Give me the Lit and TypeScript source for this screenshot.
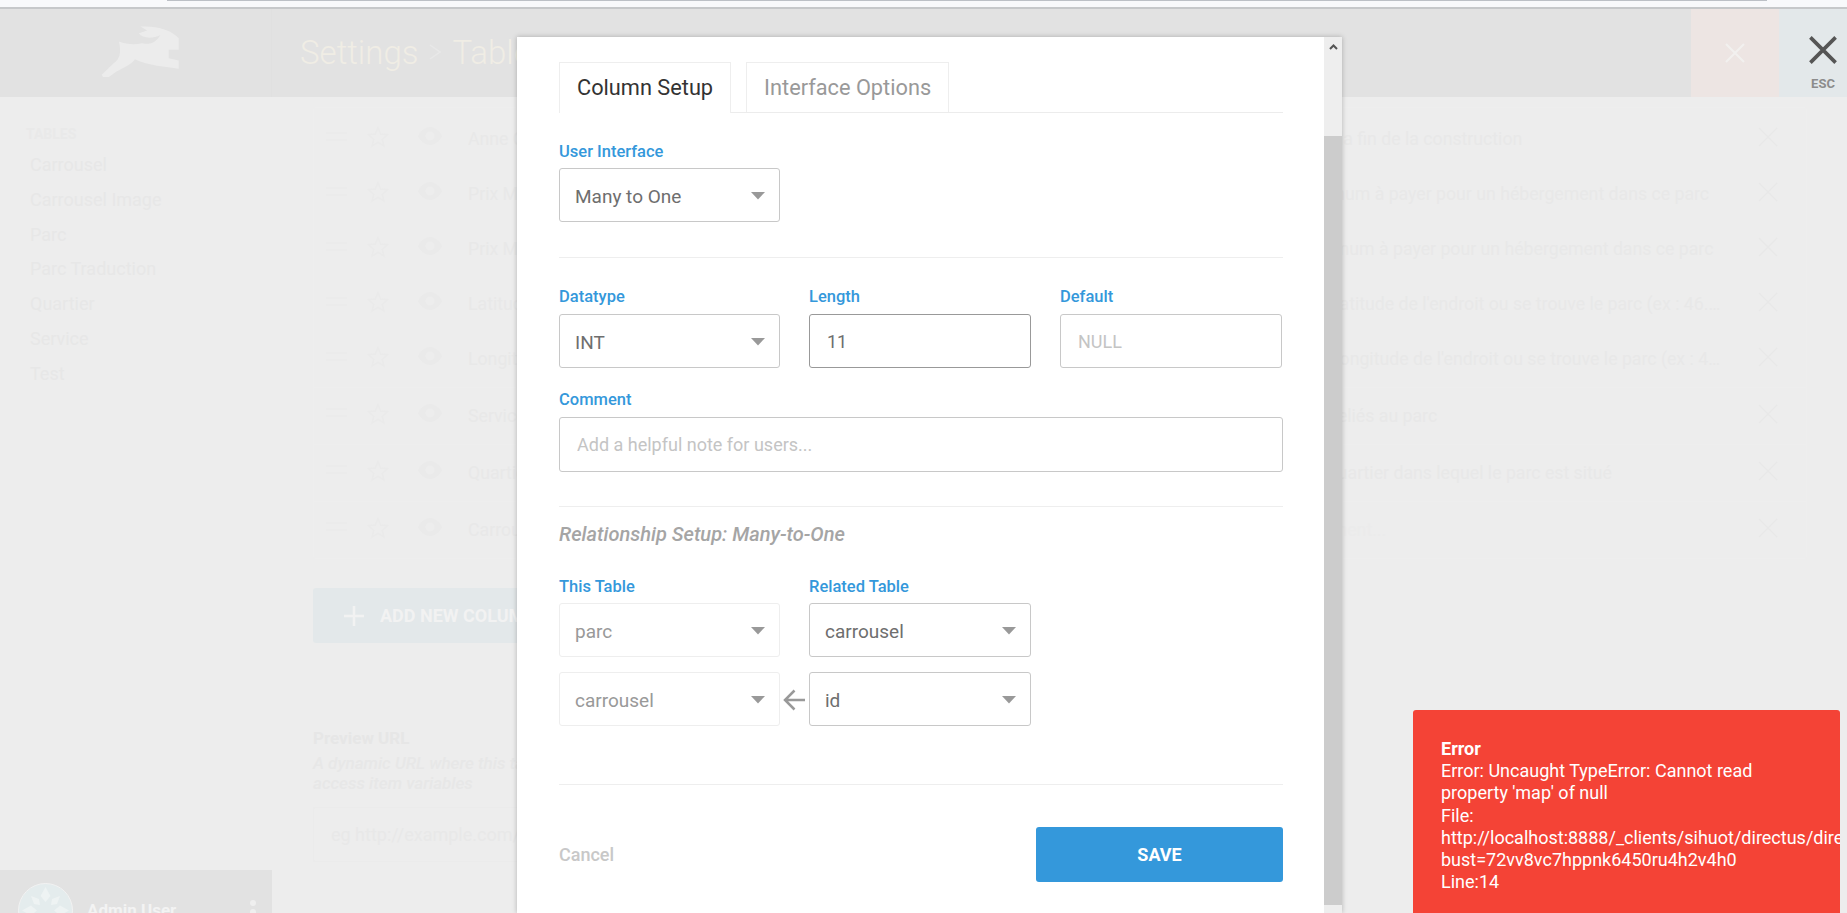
import { LitElement, html, css, svg } from "lit";
import { customElement } from "lit/decorators.js";
import { classMap } from "lit/directives/class-map.js";

const TABLES = ["Carrousel", "Carrousel Image", "Parc", "Parc Traduction", "Quartier", "Service", "Test"];

const COLUMNS = [
  { name: "Anne Construction", note: "Année de la fin de la construction", tall: false, hint: false },
  { name: "Prix Min", note: "Prix minimum à payer pour un hébergement dans ce parc", tall: false, hint: false },
  { name: "Prix Max", note: "Prix maximum à payer pour un hébergement dans ce parc", tall: false, hint: false },
  { name: "Latitude", note: "Degré de latitude de l'endroit ou se trouve le parc (ex : 46.8139)", tall: false, hint: false },
  { name: "Longitude", note: "Degré de longitude de l'endroit ou se trouve le parc (ex : 4.56781)", tall: false, hint: false },
  { name: "Services", note: "Services reliés au parc", tall: true, hint: false },
  { name: "Quartier", note: "Nom du quartier dans lequel le parc est situé", tall: true, hint: false },
  { name: "Carrousel", note: "Add comment...", tall: true, hint: true },
];

const closeIcon = (size: number, width: number) => html`
  <svg width=${size} height=${size} viewBox="0 0 20 20" fill="none" stroke="currentColor" stroke-width=${width}>
    <path d="M1 1L19 19M19 1L1 19"></path>
  </svg>
`;

const star = svg`<path d="M11 1.5l2.7 6.6 7 .5-5.4 4.6 1.7 7-6-3.8-6 3.8 1.7-7L1.300 8.600l7-.5z"></path>`;

const caret = html`
  <svg class="caret" width="14" height="8" viewBox="0 0 14 8"><path d="M0 0h14L7 7.500z"></path></svg>
`;

@customElement("app-root")
export class AppRoot extends LitElement {
  static override styles = css`
    :host {
      display: block;
      width: 1847px;
      height: 913px;
      overflow: hidden;
      position: relative;
      font-family: Roboto, "Liberation Sans", sans-serif;
      background: #ededed;
    }

    /* browser chrome sliver */
    .chrome {
      height: 7px;
      background: #f8f9fb;
      border-bottom: 2px solid #c6c8ca;
      padding: 0 80px 0 167px;
    }

    .chrome-bar {
      height: 1px;
      background: #bcc0c6;
    }

    .top {
      display: flex;
      align-items: stretch;
      height: 88px;
      background: #e2e2e2;
    }

    .logo {
      width: 272px;
      flex: none;
      display: flex;
      align-items: flex-start;
      justify-content: center;
      padding: 14px 0 0 10px;
      box-sizing: border-box;
      border-right: 1px solid #e0e0e0;
    }

    .logo svg {
      fill: #ececec;
    }

    .crumbs {
      flex: 1;
      display: flex;
      align-items: center;
      gap: 11px;
      padding: 0 0 2px 28px;
      font-size: 33px;
      font-weight: 300;
      color: #f0ede5;
    }

    .crumbs svg {
      fill: none;
      stroke: #e8e8e8;
      stroke-width: 1.500;
    }

    .top-delete {
      width: 88px;
      background: #ede5e3;
      color: #f2f0ef;
      display: flex;
      align-items: center;
      justify-content: center;
    }

    .top-esc {
      width: 68px;
      background: #e3e8ea;
      color: #555;
      display: flex;
      flex-direction: column;
      align-items: center;
      padding: 27px 0 0 20px;
      box-sizing: border-box;
      gap: 12px;
    }

    .esc-label {
      font-size: 13px;
      font-weight: 700;
      color: #8c8c8c;
    }

    .page {
      display: flex;
      height: 816px;
    }

    .side {
      width: 272px;
      flex: none;
      display: flex;
      flex-direction: column;
      padding-top: 28px;
      box-sizing: border-box;
    }

    .side-title {
      margin-left: 26px;
      font-size: 14px;
      font-weight: 700;
      line-height: 18px;
      color: #e9e9e9;
      margin-bottom: 5px;
    }

    .side-item {
      margin-left: 30px;
      height: 34.8px;
      line-height: 34.8px;
      font-size: 18px;
      color: #e7e7e7;
    }

    .user {
      margin-top: auto;
      height: 43px;
      background: #e2e2e2;
      display: flex;
      align-items: flex-start;
      padding: 13px 0 0 18px;
      box-sizing: border-box;
    }

    .avatar {
      flex: none;
      display: block;
    }

    .user-name {
      margin: 17px 0 0 14px;
      font-size: 17px;
      font-weight: 700;
      color: #f3f3f3;
    }

    .user-dots {
      margin: 17px 0 0 auto;
      padding-right: 16px;
      display: flex;
      flex-direction: column;
      gap: 3px;
    }

    .user-dots i {
      width: 6px;
      height: 6px;
      border-radius: 50%;
      background: #efefef;
    }

    .main {
      flex: 1;
      padding: 10px 40px 0 41px;
      min-width: 0;
    }

    .panel {
      border: 1px solid #eeeeee;
      border-radius: 2px;
      padding-top: 4px;
    }

    .row {
      display: grid;
      grid-template-columns: 21px 22px 24px 868px 461px 56px;
      align-items: center;
      height: 55px;
      padding-left: 12px;
      color: #e8e8e8;
      font-size: 17.700px;
    }

    .row.tall {
      height: 57px;
      border-top: 1px solid #eeeeee;
      box-sizing: border-box;
    }

    .handle {
      height: 9px;
      border-top: 2px solid #ebebeb;
      border-bottom: 2px solid #ebebeb;
      box-sizing: border-box;
      margin-top: -7px;
    }

    .star {
      margin: -5px 0 0 20px;
      fill: none;
      stroke: #eaeaea;
      stroke-width: 1.500;
    }

    .eye {
      margin: -7px 0 0 49px;
      fill: #eaeaea;
    }

    .row-name {
      margin: -1px 0 0 75px;
      white-space: nowrap;
      overflow: hidden;
    }

    .row-note {
      margin-top: -1px;
      white-space: nowrap;
      overflow: hidden;
      text-overflow: ellipsis;
    }

    .row-note.hint {
      color: #ebebeb;
    }

    .row-close {
      display: flex;
      margin-top: -5px;
      margin-left: 36px;
      color: #e8e8e8;
    }

    .add {
      display: flex;
      align-items: center;
      margin-top: 29px;
      width: 400px;
      height: 55px;
      background: #e3e8ea;
      border-radius: 3px;
      color: #f2f2f2;
      font-size: 18px;
      font-weight: 700;
      white-space: nowrap;
      padding-left: 31px;
      box-sizing: border-box;
      gap: 16px;
    }

    .preview {
      margin-top: 84px;
    }

    .preview-title {
      font-size: 17px;
      font-weight: 700;
      line-height: 22px;
      color: #e6e6e6;
    }

    .preview-help {
      width: 560px;
      margin-top: 4px;
      font-size: 17px;
      font-weight: 500;
      font-style: italic;
      line-height: 20px;
      color: #e7e7e7;
    }

    .preview-input {
      width: 700px;
      height: 55px;
      margin-top: 14px;
      border: 1px solid #ebebeb;
      border-radius: 2px;
      box-sizing: border-box;
      line-height: 53px;
      padding-left: 17px;
      font-size: 18px;
      color: #e8e8e8;
    }

    /* modal sits over the dimmed page */
    .modal {
      position: absolute;
      left: 517px;
      top: 37px;
      width: 825px;
      height: 876px;
      display: flex;
      background: #fff;
      box-shadow: 0 0 5px rgba(0, 0, 0, 0.25);
      color: #666;
    }

    .modal-body {
      flex: 1;
      padding: 25px 41px 0 42px;
      min-width: 0;
    }

    .scroll {
      width: 18px;
      flex: none;
      display: flex;
      flex-direction: column;
      background: #eee;
    }

    .scroll-top {
      height: 99px;
      display: flex;
      justify-content: center;
      padding-top: 7px;
      box-sizing: border-box;
    }

    .scroll-thumb {
      flex: 1;
      background: #ccc;
    }

    .scroll-bottom {
      height: 8px;
    }

    .tabs {
      display: flex;
      gap: 15px;
      height: 51px;
      box-sizing: border-box;
      border-bottom: 1px solid #ececec;
    }

    .tab {
      height: 51px;
      box-sizing: border-box;
      padding: 0 17px;
      border: 1px solid #eee;
      border-bottom: 0;
      font-size: 21.760px;
      line-height: 49px;
      color: #999;
    }

    .tab.active {
      background: #fff;
      color: #333;
    }

    .tab.second {
      height: 50px;
    }

    label {
      display: block;
      font-size: 16.500px;
      font-weight: 500;
      line-height: 20px;
      color: #3498db;
      margin-bottom: 7px;
    }

    .field {
      display: flex;
      align-items: center;
      justify-content: space-between;
      height: 54px;
      box-sizing: border-box;
      padding: 2px 14px 0 15px;
      border: 1px solid #c8c8c8;
      border-radius: 3px;
      font-size: 19px;
      color: #6e6e6e;
    }

    .field.off {
      border-color: #eeeeee;
      color: #999;
    }

    .caret {
      fill: #999;
    }

    input {
      display: block;
      width: 100%;
      height: 54px;
      box-sizing: border-box;
      padding: 0 17px;
      border: 1px solid #c8c8c8;
      border-radius: 3px;
      outline: none;
      font: inherit;
      font-size: 18px;
      color: #6e6e6e;
    }

    input.tall {
      height: 55px;
    }

    input.focus {
      border-color: #999;
    }

    input::placeholder {
      color: #c4c4c4;
      opacity: 1;
    }

    hr {
      margin: 0;
      border: 0;
      border-top: 1px solid #eeeeee;
    }

    .block-ui {
      margin-top: 29px;
    }

    .block-ui label {
      margin-bottom: 6px;
    }

    .select-ui {
      width: 221px;
    }

    .rule-ui {
      margin-top: 35px;
    }

    .three {
      display: grid;
      grid-template-columns: 221px 222px 222px;
      column-gap: 29px;
      margin-top: 29px;
    }

    .block-comment {
      margin-top: 22px;
    }

    .rule-comment {
      margin-top: 34px;
    }

    .pair {
      display: grid;
      grid-template-columns: 221px 29px 222px;
      align-items: center;
      margin-top: 15px;
    }

    .pair.first {
      margin-top: 31px;
    }

    .pair label {
      margin-bottom: 6px;
    }

    .arrow {
      display: flex;
      justify-content: center;
      margin-top: 2px;
      stroke: #999;
      fill: none;
      stroke-width: 2.500;
    }

    .title {
      margin-top: 15px;
      font-size: 20px;
      font-weight: 500;
      font-style: italic;
      line-height: 24px;
      color: #a5a5a5;
    }

    .rule-foot {
      margin-top: 58px;
    }

    .footer {
      display: flex;
      align-items: center;
      justify-content: space-between;
      margin-top: 42px;
    }

    .cancel {
      font-size: 18px;
      font-weight: 500;
      color: #c8c8c8;
    }

    .save {
      width: 247px;
      height: 55px;
      border: 0;
      border-radius: 3px;
      background: #3498db;
      color: #fff;
      font: inherit;
      font-size: 18px;
      font-weight: 700;
    }

    .toast {
      position: absolute;
      left: 1413px;
      top: 710px;
      width: 427px;
      height: 203px;
      box-sizing: border-box;
      padding: 28px 0 0 28px;
      overflow: hidden;
      background: #f44336;
      border-radius: 3px 3px 0 0;
      color: #fff;
      font-size: 18px;
      line-height: 22.200px;
    }

    .toast b {
      display: block;
      font-weight: 700;
    }

    .toast div {
      white-space: nowrap;
    }
  `;

  private renderSelect(value: string, off = false) {
    return html`<div class=${classMap({ field: true, off })}>${value}${caret}</div>`;
  }

  override render() {
    return html`
      <div class="chrome"><div class="chrome-bar"></div></div>
      <div class="top">
        <div class="logo">
          <svg width="83" height="57" viewBox="300 70 250 170">
            <path
              d="M425 80C470 76 520 90 540 115V150H510V175L540 182V207C500 200 450 198 408 178C395 200 360 205 330 232H312L308 225L345 190C362 178 368 160 360 125C385 135 410 135 430 130C455 135 470 128 485 105C460 118 430 115 420 100L445 92Z"
            ></path>
          </svg>
        </div>
        <div class="crumbs">
          <span>Settings</span>
          <svg width="12" height="16" viewBox="0 0 12 16"><path d="M1 1l10 7-10 7"></path></svg>
          <span>Tables</span>
        </div>
        <div class="top-delete">${closeIcon(20, 2)}</div>
        <div class="top-esc">${closeIcon(28, 2.600)}<span class="esc-label">ESC</span></div>
      </div>

      <div class="page">
        <div class="side">
          <div class="side-title">TABLES</div>
          ${TABLES.map((t) => html`<div class="side-item">${t}</div>`)}
          <div class="user">
            <svg class="avatar" width="55" height="55" viewBox="0 0 55 55">
              <circle cx="27.500" cy="27.500" r="27" fill="#e4eced" stroke="#f2f2f2"></circle>
              <path
                d="M27.500 4l5 9-5 6-5-6zM27.500 51l5-9-5-6-5 6zM4 27.500l9-5 6 5-6 5zM51 27.500l-9-5-6 5 6 5zM13 13l8 3 1 6-6-1zM42 13l-8 3-1 6 6-1zM13 42l8-3 1-6-6 1zM42 42l-8-3-1-6 6 1z"
                fill="#eef3f3"
              ></path>
            </svg>
            <div class="user-name">Admin User</div>
            <div class="user-dots"><i></i><i></i></div>
          </div>
        </div>
        <div class="main">
          <div class="panel">
            ${COLUMNS.map(
              (c) => html`
                <div class=${classMap({ row: true, tall: c.tall })}>
                  <div class="handle"></div>
                  <svg class="star" width="22" height="22" viewBox="0 0 22 22">${star}</svg>
                  <svg class="eye" width="24" height="18" viewBox="0 0 24 18">
                    <path
                      fill-rule="evenodd"
                      d="M12 0C7 0 2.700 3.700 0 9c2.700 5.300 7 9 12 9s9.300-3.700 12-9c-2.700-5.300-7-9-12-9zm0 4.500a4.500 4.500 0 1 1 0 9 4.500 4.500 0 0 1 0-9z"
                    ></path>
                  </svg>
                  <div class="row-name">${c.name}</div>
                  <div class=${classMap({ "row-note": true, hint: c.hint })}>${c.note}</div>
                  <div class="row-close">${closeIcon(20, 1.500)}</div>
                </div>
              `
            )}
          </div>
          <div class="add">
            <svg width="20" height="20" viewBox="0 0 20 20" stroke="currentColor" stroke-width="2.500">
              <path d="M10 0V20M0 10H20"></path>
            </svg>
            ADD NEW COLUMN
          </div>
          <div class="preview">
            <div class="preview-title">Preview URL</div>
            <div class="preview-help">
              A dynamic URL where this table's items can be previewed. You can<br />access item variables
            </div>
            <div class="preview-input">eg http://example.com/</div>
          </div>
        </div>
      </div>

      <div class="modal">
        <div class="modal-body">
          <div class="tabs">
            <div class="tab active">Column Setup</div>
            <div class="tab second">Interface Options</div>
          </div>

          <div class="block-ui">
            <label>User Interface</label>
            <div class="select-ui">${this.renderSelect("Many to One")}</div>
          </div>
          <hr class="rule-ui" />

          <div class="three">
            <div>
              <label>Datatype</label>
              ${this.renderSelect("INT")}
            </div>
            <div>
              <label>Length</label>
              <input class="focus" .value=${"11"} />
            </div>
            <div>
              <label>Default</label>
              <input placeholder="NULL" />
            </div>
          </div>

          <div class="block-comment">
            <label>Comment</label>
            <input class="tall" placeholder="Add a helpful note for users..." />
          </div>
          <hr class="rule-comment" />

          <div class="title">Relationship Setup: Many-to-One</div>
          <div class="pair first">
            <label>This Table</label>
            <span></span>
            <label>Related Table</label>
            ${this.renderSelect("parc", true)}
            <span></span>
            ${this.renderSelect("carrousel")}
          </div>
          <div class="pair">
            ${this.renderSelect("carrousel", true)}
            <div class="arrow">
              <svg width="23" height="22" viewBox="0 0 23 22">
                <path d="M22 11H2M11.500 1.500L2 11l9.500 9.500"></path>
              </svg>
            </div>
            ${this.renderSelect("id")}
          </div>
          <hr class="rule-foot" />

          <div class="footer">
            <span class="cancel">Cancel</span>
            <button class="save">SAVE</button>
          </div>
        </div>
        <div class="scroll">
          <div class="scroll-top">
            <svg width="9" height="6" viewBox="0 0 9 6" fill="none" stroke="#555" stroke-width="2">
              <path d="M1 5l3.500-3.500L8 5"></path>
            </svg>
          </div>
          <div class="scroll-thumb"></div>
          <div class="scroll-bottom"></div>
        </div>
      </div>

      <div class="toast">
        <b>Error</b>
        <div>Error: Uncaught TypeError: Cannot read</div>
        <div>property 'map' of null</div>
        <div>File:</div>
        <div>http://localhost:8888/_clients/sihuot/directus/directus.js?v=</div>
        <div>bust=72vv8vc7hppnk6450ru4h2v4h0</div>
        <div>Line:14</div>
      </div>
    `;
  }
}
